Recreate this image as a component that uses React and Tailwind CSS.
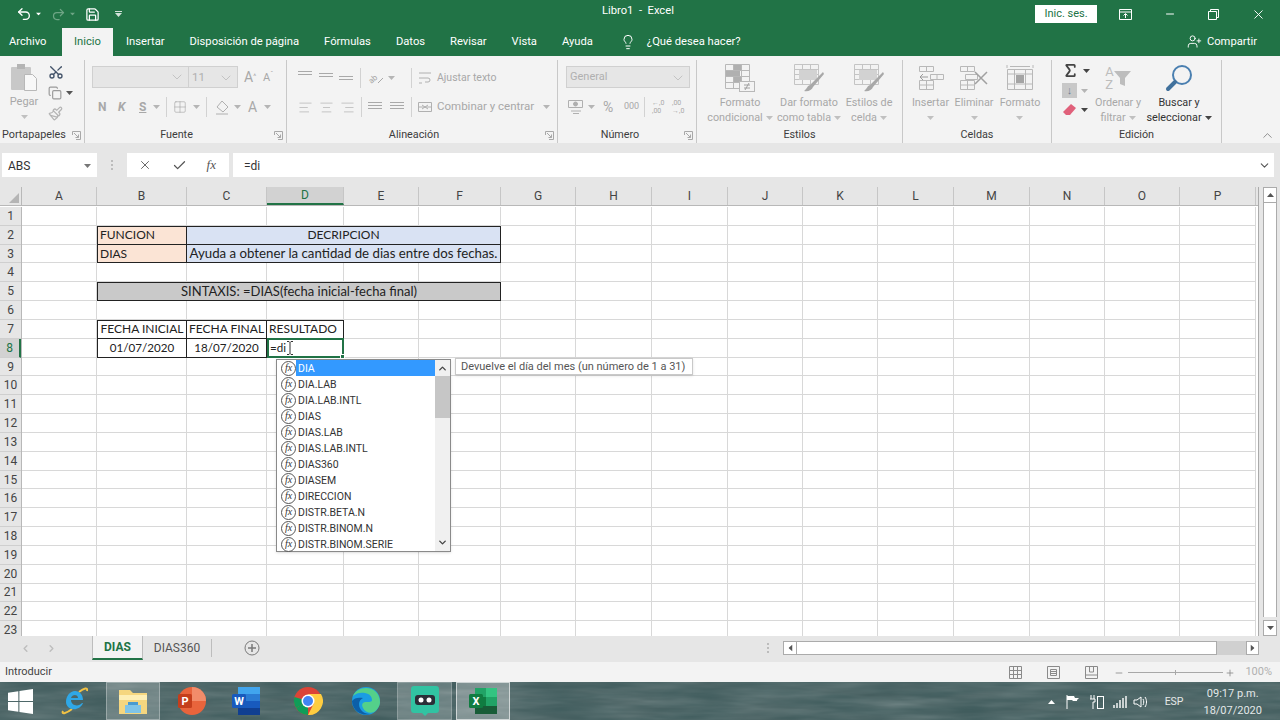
import React from 'react';
import { Undo2, Redo2, Save, ChevronDown, ChevronUp, ChevronLeft, ChevronRight, Scissors, Copy, Paintbrush, X, Check, Minus, Plus, Lightbulb, UserPlus, Sigma, AlignLeft, AlignCenter, AlignRight, Grid2x2 } from 'lucide-react';

const colWidths = [75, 90, 80, 77, 75, 82, 75, 76, 76, 75, 75, 76, 76, 75, 75, 76];
const colNames = ['A', 'B', 'C', 'D', 'E', 'F', 'G', 'H', 'I', 'J', 'K', 'L', 'M', 'N', 'O', 'P'];
const rows = Array.from({ length: 23 }, (_, i) => i + 1);

const functions = ['DIA', 'DIA.LAB', 'DIA.LAB.INTL', 'DIAS', 'DIAS.LAB', 'DIAS.LAB.INTL', 'DIAS360', 'DIASEM', 'DIRECCION', 'DISTR.BETA.N', 'DISTR.BINOM.N', 'DISTR.BINOM.SERIE'];

// cells with content, keyed by "row-col"
const cells = {
  '2-1': { text: 'FUNCION', cls: 'text-[12px] bg-[#fbe4d5] border-l border-t border-r border-b' },
  '2-2': { text: 'DECRIPCION', span: 4, cls: 'text-[12px] bg-[#d9e2f3] border-t border-r border-b justify-center' },
  '3-1': { text: 'DIAS', cls: 'text-[12px] bg-[#fbe4d5] border-l border-r border-b' },
  '3-2': { text: 'Ayuda a obtener la cantidad de dias entre dos fechas.', span: 4, cls: 'text-[13.25px] bg-[#d9e2f3] border-r border-b justify-center' },
  '5-1': { text: 'SINTAXIS: =DIAS(fecha inicial-fecha final)', span: 5, cls: 'text-[13px] bg-[#c9c9c9] border justify-center' },
  '7-1': { text: 'FECHA INICIAL', cls: 'text-[12px] border-l border-t border-r border-b justify-center' },
  '7-2': { text: 'FECHA FINAL', cls: 'text-[12px] border-t border-r border-b justify-center' },
  '7-3': { text: 'RESULTADO', cls: 'text-[12px] border-t border-r border-b' },
  '8-1': { text: '01/07/2020', cls: 'text-[11.6px] border-l border-r border-b justify-center' },
  '8-2': { text: '18/07/2020', cls: 'text-[11.6px] border-r border-b justify-center' },
};

const Caret = ({ className = '' }) => (
  <svg width="7" height="4" viewBox="0 0 7 4" className={className.includes('text-') ? className : `text-[#b5b5b5] ${className}`}><path d="M0 0h7L3.5 4z" fill="currentColor" /></svg>
);

const Launcher = () => (
  <svg width="9" height="9" viewBox="0 0 9 9" fill="none" stroke="#a8a8a8"><path d="M.5 4V.5h8v8H4M2 2l4.500 4.500M6.500 3.500v3h-3" /></svg>
);

const Sep = ({ h = 'h-[20px]' }) => <div className={`w-px ${h} bg-[#d2d2d2]`} />;

const Lines = ({ w = [14, 14, 14], align = 'start' }) => (
  <svg width="15" height="12" viewBox="0 0 15 12" stroke="#a9a9a9">
    {w.map((len, i) => {
      const x = align === 'start' ? 0 : align === 'end' ? 15 - len : (15 - len) / 2;
      return <path key={i} d={`M${x} ${1.500 + i * 3}h${len}`} />;
    })}
  </svg>
);

const LabelCol = ({ lines, width, icon, dark, caret }) => (
  <div className={`flex flex-col items-center ${width}`}>
    <div className="h-[35px] flex items-center justify-center">{icon}</div>
    <div className={`text-center text-[10.8px] leading-[15px] whitespace-nowrap ${dark ? 'text-[#333]' : 'text-[#a8a8a8]'}`}>
      {lines.map((l, i) => (
        <div key={i} className="flex items-center justify-center gap-[3px] h-[15px]">
          {l}
          {caret && i === lines.length - 1 && l && <Caret className={dark ? 'text-[#444]' : 'text-[#c0c0c0]'} />}
        </div>
      ))}
      {lines.length === 1 && <div className="flex items-center justify-center h-[15px]"><Caret className="text-[#c0c0c0]" /></div>}
    </div>
  </div>
);

const Group = ({ label, width, launcher, children, labelCls = 'justify-center' }) => (
  <div className={`flex flex-col h-[83px] mt-[4px] shrink-0 border-r border-[#c8c8c8] ${width}`}>
    <div className="h-[67px] flex">{children}</div>
    <div className={`relative h-[16px] flex items-center text-[10.8px] text-[#3c3c3c] ${labelCls}`}>
      {label}
      {launcher && <span className="absolute right-[3px] top-[4px]"><Launcher /></span>}
    </div>
  </div>
);

const CondFormatIcon = () => (
  <svg width="32" height="30" viewBox="0 0 32 30" fill="none" stroke="#b8b8b8">
    <path d="M1.500 1.500h24v24h-24zM1.500 7.500h24M1.500 13.500h24M1.500 19.500h24M9.500 1.500v24M17.500 1.500v24" />
    <path d="M10 2h7v5h-7zM2 8h14v5H2zM10 14h7v5h-7z" fill="#b0b0b0" stroke="none" />
    <rect x="15.500" y="18.500" width="15" height="10" fill="#f3f3f3" />
    <path d="M20 22h6M20 25h6M25 20l-4 7" stroke="#a0a0a0" />
  </svg>
);

const TableFormatIcon = () => (
  <svg width="32" height="30" viewBox="0 0 32 30" fill="none" stroke="#c4c4c4">
    <path d="M1.500 1.500h24v20h-24zM1.500 6.500h24M1.500 11.500h24M1.500 16.500h24M9.500 1.500v20M17.500 1.500v20" />
    <path d="M6 7h18v10H6z" fill="#d2d2d2" stroke="none" />
    <path d="M30 9L17 22c-3 1-3 4-6 6 4 1 8-1 9-4l11-13z" fill="#a8a8a8" stroke="none" />
  </svg>
);

const InsertIcon = () => (
  <svg width="26" height="26" viewBox="0 0 26 26" fill="none" stroke="#b8b8b8">
    <path d="M1.500 1.500h14v5h-14zM8.500 1.500v5M1.500 15.500h14v9h-14zM1.500 20h14M8.500 15.500v9M12.500 9.500h13v5h-13zM19 9.500v5" />
    <path d="M10 12H2M5 9l-3 3 3 3" stroke="#9a9a9a" />
  </svg>
);

const DeleteIcon = () => (
  <svg width="30" height="26" viewBox="0 0 30 26" fill="none" stroke="#b8b8b8">
    <path d="M1.500 1.500h14v5h-14zM8.500 1.500v5M1.500 15.500h14v9h-14zM1.500 20h14M8.500 15.500v9M6.500 9.500h12v5h-12z" />
    <path d="M16 7l12 12M28 7L16 19" stroke="#a0a0a0" strokeWidth="1.500" />
  </svg>
);

const CellFormatIcon = () => (
  <svg width="28" height="28" viewBox="0 0 28 28" fill="none" stroke="#b8b8b8">
    <path d="M1.500 5.500h25v20h-25zM1.500 10h25M1.500 20h25M8.500 5.500v20M19.500 5.500v20M1 1v3M27 1v3M4 2.500h20" />
    <rect x="10" y="11" width="8" height="8" fill="#a4a4a4" stroke="none" />
  </svg>
);

const FxBadge = () => (
  <span className="flex items-center justify-center w-[15px] h-[15px] rounded-full border border-[#555] bg-white text-[10px] italic leading-none text-[#333] shrink-0 font-['Liberation_Serif',serif]">
    fx
  </span>
);

const Cell = ({ row, col }) => {
  const cell = cells[`${row}-${col}`];
  if (!cell) return <div className="border-r border-b border-[#d8d8d8]" />;
  return (
    <div
      style={cell.span ? { gridColumn: `span ${cell.span}` } : undefined}
      className={`flex items-center px-[2px] text-[#222] border-[#222] whitespace-nowrap overflow-hidden ${cell.cls}`}
    >
      {cell.text}
    </div>
  );
};

// cells covered by a merged one are skipped when the grid is filled
const covered = (row, col) => {
  if ((row === 2 || row === 3) && col >= 3 && col <= 5) return true;
  if (row === 5 && col >= 2 && col <= 5) return true;
  return false;
};

export default function App() {
  return (
    <div className="relative flex flex-col w-[1280px] h-[720px] overflow-hidden bg-[#e6e6e6] font-['Roboto',sans-serif] text-[12px]">
      {/* Title bar */}
      <div className="relative flex items-center h-[28px] bg-[#217346] text-white shrink-0">
        <div className="flex items-center pl-[16px]">
          <Undo2 size={16} strokeWidth={2} />
          <Caret className="text-white ml-[3px] scale-75" />
          <Redo2 size={15} className="text-[#6ea585] ml-[9px]" />
          <Caret className="text-[#6ea585] ml-[3px] scale-75" />
          <Save size={15} strokeWidth={2} className="ml-[9px]" />
          <span className="ml-[15px] flex flex-col items-center gap-[1px]">
            <span className="w-[7px] h-px bg-white/80" />
            <Caret className="text-white/80" />
          </span>
        </div>
        <div className="absolute left-[602px] top-[3px] text-[11.2px] leading-[16px] text-white whitespace-pre">Libro1  -  Excel</div>
        <div className="ml-auto flex items-center">
          <div className="flex items-center justify-center w-[62px] h-[18px] bg-white text-[#217346] text-[11px] mr-[22px]">Inic. ses.</div>
          <svg width="13" height="11" viewBox="0 0 13 11" fill="none" stroke="white" className="mr-[32px]"><path d="M.5.5h12v10H.5zM.5 3h12M6.500 9V5M4.500 6.500l2-2 2 2" /></svg>
          <Minus size={12} className="mr-[32px]" />
          <svg width="11" height="11" viewBox="0 0 11 11" fill="none" stroke="white" className="mr-[32px]"><path d="M.5 2.500h8v8h-8zM2.500 2.500v-2h8v8h-2" /></svg>
          <X size={15} strokeWidth={1.500} className="mr-[14px]" />
        </div>
      </div>

      {/* Ribbon tabs */}
      <div className="flex items-center h-[28px] bg-[#217346] text-white text-[11.2px] shrink-0">
        <div className="w-[62px] pl-[9px]">Archivo</div>
        <div className="flex items-center justify-center h-full w-[51px] bg-[#f3f3f3] text-[#217346]">Inicio</div>
        <div className="flex items-center gap-[25px] pl-[13px] whitespace-nowrap">
          <span>Insertar</span>
          <span>Disposición de página</span>
          <span>Fórmulas</span>
          <span>Datos</span>
          <span>Revisar</span>
          <span>Vista</span>
          <span>Ayuda</span>
        </div>
        <Lightbulb size={16} strokeWidth={1.500} className="ml-[27px]" />
        <span className="ml-[11px]">¿Qué desea hacer?</span>
        <div className="ml-auto flex items-center gap-[5px] pr-[23px]">
          <UserPlus size={15} strokeWidth={1.500} />
          <span>Compartir</span>
        </div>
      </div>

      {/* Ribbon */}
      <div className="relative flex h-[87px] bg-[#f3f3f3] shrink-0">
        <Group label="Portapapeles" width="w-[85px]" launcher labelCls="justify-start pl-[2px]">
          <div className="flex flex-col items-center w-[48px] pt-[3px]">
            <svg width="28" height="29" viewBox="0 0 28 29">
              <rect x="1" y="4" width="20" height="23" rx="1" fill="#c8c8c8" />
              <rect x="7" y="1" width="8" height="5" fill="#b4b4b4" />
              <path d="M14.500 11.500h8l4 4v12h-12z" fill="#f8f8f8" stroke="#b8b8b8" />
            </svg>
            <span className="mt-[2px] text-[11px] leading-[15px] text-[#a8a8a8]">Pegar</span>
            <Caret className="mt-[6px] text-[#c0c0c0]" />
          </div>
          <div className="flex flex-col gap-[6px] pt-[4px]">
            <Scissors size={16} className="text-[#44546a] -rotate-90" />
            <div className="flex items-center gap-[4px]"><Copy size={14} className="text-[#9a9a9a]" /><Caret className="text-[#555]" /></div>
            <Paintbrush size={15} className="text-[#b4b4b4]" />
          </div>
        </Group>

        <Group label="Fuente" width="w-[202px]" launcher labelCls="justify-center pr-[18px]">
          <div className="flex flex-col pl-[7px] w-full">
            <div className="flex items-center h-[22px] mt-[6px]">
              <div className="flex items-center justify-end w-[97px] h-[22px] bg-[#e6e6e6] border border-[#d0d0d0] pr-[3px]"><ChevronDown size={16} strokeWidth={1} className="text-[#b0b0b0]" /></div>
              <div className="flex items-center justify-between w-[49px] h-[22px] bg-[#e6e6e6] border border-l-0 border-[#d0d0d0] px-[3px] pt-px text-[#b0b0b0] text-[11.5px]">11<ChevronDown size={16} strokeWidth={1} /></div>
              <span className="ml-[6px] text-[14px] text-[#a8a8a8] leading-none">A<sup className="text-[7px]">^</sup></span>
              <span className="ml-[7px] text-[11px] text-[#a8a8a8] leading-none">A<sup className="text-[7px]">ˇ</sup></span>
            </div>
            <div className="flex items-center h-[20px] mt-[9px] pl-[6px] text-[#a8a8a8] font-bold text-[12px]">
              <span className="w-[20px]">N</span>
              <span className="w-[21px] italic">K</span>
              <span className="w-[12px] underline">S</span>
              <Caret className="ml-[2px] mr-[6px]" />
              <Sep />
              <Grid2x2 size={14} strokeWidth={1} className="ml-[6px] text-[#a0a0a0]" />
              <Caret className="ml-[6px] mr-[6px]" />
              <Sep />
              <svg width="15" height="15" viewBox="0 0 15 15" className="ml-[8px]" fill="none" stroke="#b0b0b0"><path d="M7 1l6 6-5 5-6-5zM1 14h12" /></svg>
              <Caret className="ml-[4px] mr-[7px]" />
              <span className="text-[14px] font-normal leading-none">A</span>
              <Caret className="ml-[7px]" />
            </div>
          </div>
        </Group>

        <Group label="Alineación" width="w-[271px]" launcher labelCls="justify-center pr-[16px]">
          <div className="flex flex-col pl-[11px] w-full">
            <div className="flex items-center h-[20px] mt-[8px]">
              <span className="w-[21px] -mt-[4px]"><Lines w={[14, 14]} /></span>
              <span className="w-[20px]"><Lines w={[14, 14]} /></span>
              <span className="w-[21px] pt-[5px]"><Lines w={[14, 14]} /></span>
              <Sep />
              <svg width="17" height="15" viewBox="0 0 17 15" fill="#a8a8a8" className="ml-[7px]">
                <text x="1" y="11" fontSize="8" transform="rotate(-40 5 9)">ab</text>
                <path d="M10 12l5-5" stroke="#a8a8a8" fill="none" />
              </svg>
              <Caret className="ml-[3px] mr-[16px]" />
              <Sep />
              <svg width="14" height="14" viewBox="0 0 14 14" fill="none" stroke="#b0b0b0" className="ml-[6px]"><path d="M1 2h12M1 7h9a2 2 0 010 4H7M1 12h3" /></svg>
              <span className="ml-[5px] text-[#a8a8a8] text-[10.5px] whitespace-nowrap">Ajustar texto</span>
            </div>
            <div className="flex items-center h-[20px] mt-[9px]">
              <AlignLeft size={15} strokeWidth={1} className="text-[#a9a9a9] mr-[6px]" />
              <AlignCenter size={15} strokeWidth={1} className="text-[#a9a9a9] mr-[6px]" />
              <AlignRight size={15} strokeWidth={1} className="text-[#a9a9a9] mr-[6px]" />
              <Sep />
              <span className="ml-[6px] w-[22px]"><Lines /></span>
              <Lines />
              <span className="w-[6px]" />
              <Sep />
              <svg width="14" height="14" viewBox="0 0 14 14" fill="none" stroke="#b0b0b0" className="ml-[6px]"><path d="M.5 2.500h13v9H.5zM.5 7h13M4 5l3 2-3 2M10 5L7 7l3 2" /></svg>
              <span className="ml-[5px] text-[#a8a8a8] text-[11.5px] whitespace-nowrap">Combinar y centrar</span>
              <Caret className="ml-[9px]" />
            </div>
          </div>
        </Group>

        <Group label="Número" width="w-[139px]" launcher labelCls="justify-center pr-[14px]">
          <div className="flex flex-col pl-[8px] w-full">
            <div className="flex items-center justify-between w-[124px] h-[22px] mt-[6px] bg-[#e6e6e6] border border-[#d0d0d0] px-[3px] pt-px text-[#b0b0b0] text-[11px]">General<ChevronDown size={16} strokeWidth={1} /></div>
            <div className="flex items-center h-[20px] mt-[9px] text-[#a8a8a8]">
              <svg width="16" height="15" viewBox="0 0 16 15" fill="none" stroke="#b0b0b0" className="ml-[2px]"><path d="M.5.500h14v7H.5zM3 11h10M5 13.500h6" /><circle cx="7.500" cy="4" r="2" fill="#b0b0b0" /></svg>
              <Caret className="ml-[4px] mr-[8px]" />
              <span className="text-[14px] w-[21px]">%</span>
              <span className="text-[9px] w-[20px]">000</span>
              <Sep />
              <span className="ml-[7px] text-[7px] leading-[8px] w-[20px]">←,0<br />,00</span>
              <span className="text-[7px] leading-[8px]">,00<br />→,0</span>
            </div>
          </div>
        </Group>

        <Group label="Estilos" width="w-[206px]">
          <LabelCol width="w-[84px] ml-[1px]" icon={<CondFormatIcon />} lines={['Formato', 'condicional']} caret />
          <LabelCol width="w-[54px]" icon={<TableFormatIcon />} lines={['Dar formato', 'como tabla']} caret />
          <LabelCol width="w-[66px]" icon={<TableFormatIcon />} lines={['Estilos de', 'celda']} caret />
        </Group>

        <Group label="Celdas" width="w-[149px]">
          <LabelCol width="w-[49px] ml-[3px]" icon={<InsertIcon />} lines={['Insertar']} />
          <LabelCol width="w-[38px]" icon={<DeleteIcon />} lines={['Eliminar']} />
          <LabelCol width="w-[54px]" icon={<CellFormatIcon />} lines={['Formato']} />
        </Group>

        <Group label="Edición" width="w-[170px]">
          <div className="flex flex-col gap-[4px] pl-[10px] pt-[2px] w-[44px]">
            <div className="flex items-center gap-[4px]"><Sigma size={17} strokeWidth={2.500} className="text-[#444]" /><Caret className="text-[#444]" /></div>
            <div className="flex items-center gap-[4px]">
              <span className="flex items-center justify-center w-[15px] h-[15px] bg-[#c8c8c8] text-[#6e7f92] text-[11px] leading-none">↓</span>
              <Caret />
            </div>
            <div className="flex items-center gap-[4px]">
              <svg width="15" height="15" viewBox="0 0 15 15" className="text-[#e0607a]"><path d="M9 2l5 4-6 7H4L1 10z" fill="currentColor" /></svg>
              <Caret className="text-[#444]" />
            </div>
          </div>
          <LabelCol width="w-[44px]" icon={
            <div className="flex items-center">
              <div className="flex flex-col text-[13px] leading-[13px] text-[#bdbdbd]"><span>A</span><span>Z</span></div>
              <svg width="17" height="18" viewBox="0 0 17 18"><path d="M0 2h17l-6 7v8l-5-2V9z" fill="#bdbdbd" /></svg>
            </div>
          } lines={['Ordenar y', 'filtrar']} caret />
          <LabelCol dark width="w-[78px]" icon={
            <svg width="28" height="28" viewBox="0 0 28 28" fill="none">
              <circle cx="17" cy="11" r="9" stroke="#4a7fb0" strokeWidth="2" />
              <path d="M10 18l-7 7" stroke="#41719c" strokeWidth="4" strokeLinecap="round" />
            </svg>
          } lines={['Buscar y', 'seleccionar']} caret />
        </Group>

        <ChevronUp size={15} strokeWidth={1} className="absolute right-[5px] bottom-[0px] text-[#555]" />
      </div>

      {/* Formula bar */}
      <div className="flex items-center h-[44px] pt-[10px] pb-[10px] shrink-0">
        <div className="flex items-center justify-between w-[95px] h-[24px] ml-[2px] bg-white px-[6px] pt-[1px] text-[12px] text-[#333]">ABS<Caret className="text-[#777]" /></div>
        <div className="flex flex-col gap-[2px] ml-[14px]">
          <span className="w-[2px] h-[2px] bg-[#bcbcbc]" /><span className="w-[2px] h-[2px] bg-[#bcbcbc]" /><span className="w-[2px] h-[2px] bg-[#bcbcbc]" />
        </div>
        <div className="flex items-center justify-between w-[102px] h-[24px] ml-[14px] bg-white px-[11px] text-[#555]">
          <X size={14} strokeWidth={1.500} />
          <Check size={15} strokeWidth={2} />
          <span className="italic text-[13px] font-['Liberation_Serif',serif] pr-[2px]">fx</span>
        </div>
        <div className="flex items-center justify-between w-[1041px] h-[24px] ml-[4px] bg-white pl-[11px] pr-[3px] pt-[1px] text-[#333]">
          =di
          <ChevronDown size={13} strokeWidth={2} className="text-[#555]" />
        </div>
      </div>

      {/* Sheet area */}
      <div className="relative flex h-[449px] shrink-0 bg-white overflow-hidden">
        <div className="w-[1259px] shrink-0 font-['Lato',sans-serif] border-r border-[#ababab]">
          <div className="flex h-[19px] bg-[#e6e6e6] text-[12px] text-[#444] font-['Roboto',sans-serif] border-b border-[#b8b8b8]">
            <div className="relative w-[22px] shrink-0 border-r border-[#b8b8b8]">
              <svg width="10" height="10" viewBox="0 0 10 10" className="absolute right-[2px] bottom-[2px]"><path d="M10 0v10H0z" fill="#b5b5b5" /></svg>
            </div>
            {colNames.map((c, i) => (
              <div key={c} style={{ width: colWidths[i] }} className={`flex items-center justify-center shrink-0 border-r border-[#c6c6c6] ${c === 'D' ? 'bg-[#d2d2d2] border-b-2 border-b-[#217346] text-[#217346]' : ''}`}>{c}</div>
            ))}
          </div>
          <div className="flex pt-px">
            <div className="w-[22px] shrink-0 bg-[#e6e6e6] border-r border-[#b8b8b8]">
              {rows.map((r) => (
                <div key={r} className={`flex items-center justify-center h-[18.83px] text-[12px] text-[#444] font-['Roboto',sans-serif] border-b border-[#cfcfcf] ${r === 8 ? 'bg-[#d2d2d2] text-[#217346] border-r-2 border-r-[#217346]' : ''}`}>{r}</div>
              ))}
            </div>
            <div className="relative grid auto-rows-[18.83px] grid-cols-[75px_90px_80px_77px_75px_82px_75px_76px_76px_75px_75px_76px_76px_75px_75px_76px]">
              {rows.map((r) => colNames.map((c, col) => (
                covered(r, col) ? null : r === 8 && col === 3 ? (
                  <div key={`${r}-${c}`} className="relative flex items-center pl-px text-[11.6px] text-[#222] border-2 border-[#217346] -mt-px">
                    =di
                    <svg width="6" height="14" viewBox="0 0 6 14" fill="none" stroke="#333" className="ml-[1px]"><path d="M0 .5h2l1 1 1-1h2M3 1.500v11M0 13.500h2l1-1 1 1h2" /></svg>
                    <span className="absolute -right-[3px] -bottom-[3px] w-[5px] h-[5px] bg-[#217346] border border-white" />
                  </div>
                ) : (
                  <Cell key={`${r}-${c}`} row={r} col={col} />
                )
              )))}
            </div>
          </div>
        </div>

        {/* Vertical scrollbar */}
        <div className="flex flex-col w-[21px] bg-[#e6e6e6] pl-[4px] pr-[3px]">
          <div className="flex items-center justify-center h-[16px] bg-white border border-[#ababab]"><Caret className="text-[#555] rotate-180" /></div>
          <div className="flex-1 flex flex-col">
            <div className="h-[414px] bg-white border-x border-[#ababab]" />
          </div>
          <div className="flex items-center justify-center h-[16px] bg-white border border-[#ababab]"><Caret className="text-[#555]" /></div>
        </div>

        {/* Autocomplete list */}
        <div className="absolute left-[276px] top-[172px] flex w-[175px] h-[193px] bg-white border border-[#8a8a8a] shadow-sm font-['Roboto',sans-serif]">
          <div className="w-[159px] pl-[4px]">
            {functions.map((f, i) => (
              <div key={f} className="flex items-center h-[16px] text-[10.5px] text-[#333]">
                <FxBadge />
                <span className={`flex items-center flex-1 h-full pl-[2px] pt-px ${i === 0 ? 'bg-[#3399ff] text-white' : ''}`}>{f}</span>
              </div>
            ))}
          </div>
          <div className="flex flex-col items-center w-[15px] bg-[#f0f0f0]">
            <ChevronUp size={11} strokeWidth={3} className="mt-[3px] text-[#444]" />
            <div className="w-full h-[42px] mt-[2px] bg-[#c6c6c6]" />
            <ChevronDown size={11} strokeWidth={3} className="mt-auto mb-[3px] text-[#444]" />
          </div>
        </div>

        {/* Tooltip */}
        <div className="absolute left-[455px] top-[171px] flex items-center w-[238px] h-[17px] bg-white border border-[#c9c9c9] shadow-sm pl-[5px] pt-px text-[11px] text-[#555] whitespace-nowrap">
          Devuelve el día del mes (un número de 1 a 31)
        </div>
      </div>

      {/* Sheet tabs */}
      <div className="flex items-center h-[26px] bg-[#e6e6e6] shrink-0 pb-[2px]">
        <div className="flex items-center gap-[15px] pl-[20px] w-[92px] text-[#bdbdbd]">
          <ChevronLeft size={11} strokeWidth={3} />
          <ChevronRight size={11} strokeWidth={3} />
        </div>
        <div className="flex items-center justify-center w-[51px] h-[24px] bg-[#f3f3f3] border-x border-[#bdbdbd] border-b-2 border-b-[#217346] text-[#217346] font-bold text-[12px]">DIAS</div>
        <div className="flex items-center justify-center w-[69px] h-[18px] text-[#555] border-r border-[#bdbdbd]">DIAS360</div>
        <svg width="16" height="16" viewBox="0 0 16 16" fill="none" stroke="#7a7a7a" className="ml-[32px]"><circle cx="8" cy="8" r="7" /><path d="M8 4v8M4 8h8" strokeWidth="1.500" /></svg>
        <div className="flex flex-col gap-[2px] ml-[507px]">
          <span className="w-[2px] h-[2px] bg-[#bcbcbc]" /><span className="w-[2px] h-[2px] bg-[#bcbcbc]" /><span className="w-[2px] h-[2px] bg-[#bcbcbc]" />
        </div>
        <div className="flex h-[14px] ml-[14px] w-[476px] bg-[#d0d0d0]">
          <div className="flex items-center justify-center w-[14px] bg-white border border-[#ababab]"><Caret className="text-[#555] rotate-90" /></div>
          <div className="w-[420px] bg-white border-y border-r border-[#ababab]" />
          <div className="flex-1" />
          <div className="flex items-center justify-center w-[13px] bg-white border border-[#ababab]"><Caret className="text-[#555] -rotate-90" /></div>
        </div>
      </div>

      {/* Status bar */}
      <div className="flex items-center h-[20px] bg-[#f3f3f3] shrink-0 text-[11px] text-[#444] pl-[5px] pt-px">
        <span>Introducir</span>
        <div className="ml-auto flex items-center text-[#8a8a8a]">
          <svg width="13" height="13" viewBox="0 0 13 13" fill="none" stroke="currentColor"><path d="M.5.500h12v12H.5zM.5 4.500h12M.5 8.500h12M4.500.500v12M8.500.500v12" /></svg>
          <svg width="13" height="13" viewBox="0 0 13 13" fill="none" stroke="currentColor" className="ml-[25px]"><path d="M.5.500h12v12H.5zM3.500 3.500h6v6h-6zM3.500 5.500h6M3.500 7.500h6" /></svg>
          <svg width="13" height="13" viewBox="0 0 13 13" fill="none" stroke="currentColor" className="ml-[25px]"><path d="M.5.500h12v12H.5zM.5 9h12M4.500.500V6h4V.500" /></svg>
          <Minus size={10} className="ml-[16px]" />
          <div className="relative w-[95px] h-px ml-[4px] bg-[#a8a8a8]"><span className="absolute left-[47px] -top-[2px] w-px h-[5px] bg-[#a8a8a8]" /></div>
          <Plus size={10} className="ml-[2px]" />
          <span className="ml-[10px] mr-[8px] text-[#b0b0b0]">100%</span>
        </div>
      </div>

      {/* Taskbar */}
      <div className="relative flex items-center flex-1 bg-[#3d5a5b] text-white overflow-hidden">
        <svg className="absolute inset-0 w-full h-full opacity-30" aria-hidden="true">
          <filter id="water"><feTurbulence type="fractalNoise" baseFrequency="0.015 0.12" numOctaves="3" seed="4" /><feColorMatrix type="saturate" values="0" /></filter>
          <rect width="100%" height="100%" filter="url(#water)" />
        </svg>
        <div className="relative flex items-center w-full">
          <svg width="25" height="25" viewBox="0 0 23 23" fill="white" className="ml-[8px]"><path d="M0 3.500l9.500-1.500v9H0zM10.500 1.800L23 0v11H10.500zM0 12h9.500v9L0 19.500zM10.500 12H23v11l-12.500-1.800z" /></svg>

          <svg width="28" height="30" viewBox="0 0 28 30" className="ml-[27px]" fill="none">
            <path d="M3 25C1 29 7 27 12 23M19 6c5-4 9-5 8-1" stroke="#f3c344" strokeWidth="2" />
            <path d="M6 16c0-6 4-11 9-11s8 4 8 9H11c0 6 8 7 11 3h-1 2c-2 5-7 7-11 6-4-1-6-4-6-7zm5-4h7c0-4-6-4-7 0z" fill="#2fa7e6" />
          </svg>

          <div className="flex items-center justify-center w-[54px] h-[38px] ml-[18px] bg-white/20 border border-white/30">
            <svg width="30" height="28" viewBox="0 0 30 28">
              <path d="M1 3h11l3 3h14v21H1z" fill="#f5d67f" />
              <path d="M1 8h28v5H1z" fill="#fdeeb5" />
              <path d="M7 18h16v8H7z" fill="#7fc4e8" />
              <path d="M10 15h10v3H10z" fill="#4a9bd0" />
            </svg>
          </div>

          <svg width="32" height="32" viewBox="0 0 32 32" className="ml-[15px]">
            <circle cx="17" cy="16" r="14" fill="#e8643c" />
            <path d="M17 2a14 14 0 0114 14H17z" fill="#f28c6a" />
            <rect x="3" y="9" width="14" height="14" rx="1.500" fill="#c43e1c" />
            <text x="10" y="20" fill="white" fontSize="11" fontWeight="700" textAnchor="middle">P</text>
          </svg>

          <svg width="32" height="32" viewBox="0 0 32 32" className="ml-[23px]">
            <rect x="8" y="2" width="22" height="7" fill="#41a5ee" />
            <rect x="8" y="9" width="22" height="7" fill="#2b7cd3" />
            <rect x="8" y="16" width="22" height="7" fill="#185abd" />
            <rect x="8" y="23" width="22" height="7" fill="#103f91" />
            <rect x="2" y="9" width="14" height="14" rx="1.500" fill="#185abd" />
            <text x="9" y="20" fill="white" fontSize="11" fontWeight="700" textAnchor="middle">W</text>
          </svg>

          <svg width="30" height="30" viewBox="0 0 30 30" className="ml-[31px]">
            <circle cx="15" cy="15" r="14" fill="#db4437" />
            <path d="M15 15L3 22a14 14 0 0012 7z" fill="#0f9d58" />
            <path d="M15 15l-12 7A14 14 0 011.500 11z" fill="#0f9d58" />
            <path d="M15 8h13a14 14 0 01-13 21l6-12z" fill="#ffcd40" />
            <circle cx="15" cy="15" r="6.500" fill="white" />
            <circle cx="15" cy="15" r="5" fill="#4285f4" />
          </svg>

          <svg width="30" height="30" viewBox="0 0 30 30" className="ml-[28px]">
            <circle cx="15" cy="15" r="14" fill="#1b9de2" />
            <path d="M29 16c0-8-6-14-14-14C9 2 4 5 2 10c3-3 8-4 12-3 5 1 7 4 7 7 0 2-3 2-6 2-3 0-5 2-3 6 2 4 7 6 11 4 3-2 6-6 6-10z" fill="#54d08a" />
            <path d="M1 15a14 14 0 0018 13c-6 0-11-4-11-10 0-3 2-5 4-6-5-1-9 0-11 3z" fill="#0d5fa8" />
          </svg>

          <div className="flex items-center justify-center w-[55px] h-[38px] ml-[16px] bg-white/20 border border-white/20">
            <svg width="30" height="32" viewBox="0 0 30 32">
              <path d="M4 1h22a3 3 0 013 3v21a3 3 0 01-3 3H18l-3 3-3-3H4a3 3 0 01-3-3V4a3 3 0 013-3z" fill="#31c3a2" />
              <rect x="5" y="10" width="20" height="10" rx="3" fill="#2b2e38" />
              <circle cx="11" cy="15" r="2.500" fill="white" />
              <circle cx="19" cy="15" r="2.500" fill="white" />
            </svg>
          </div>

          <div className="flex items-center justify-center w-[54px] h-[38px] ml-[4px] bg-white/30 border border-white/60">
            <svg width="30" height="30" viewBox="0 0 30 30">
              <rect x="7" y="2" width="11" height="9" fill="#21a366" />
              <rect x="18" y="2" width="11" height="9" fill="#33c481" />
              <rect x="7" y="11" width="11" height="9" fill="#107c41" />
              <rect x="18" y="11" width="11" height="9" fill="#21a366" />
              <rect x="7" y="20" width="22" height="8" fill="#185c37" />
              <rect x="1" y="8" width="14" height="14" rx="1.500" fill="#107c41" />
              <text x="8" y="19" fill="white" fontSize="11" fontWeight="700" textAnchor="middle">X</text>
            </svg>
          </div>

          <div className="ml-auto flex items-center text-[#e4e8e8] pr-[18px] pt-px">
            <Caret className="text-white rotate-180" />
            <svg width="14" height="14" viewBox="0 0 14 14" fill="none" stroke="white" className="ml-[11px]"><path d="M1 0v14" /><path d="M1 1h7l1 2h4l-2 2 0 1H7L6 5H1z" fill="white" stroke="none" /></svg>
            <svg width="14" height="16" viewBox="0 0 14 16" fill="none" stroke="white" className="ml-[10px]"><path d="M1 1v4M4 1v4M0 5h5v3H3v7" /><rect x="7.500" y="2.500" width="6" height="12" /></svg>
            <svg width="14" height="14" viewBox="0 0 14 14" fill="none" stroke="white" className="ml-[9px] opacity-70"><path d="M1 13v-3M4 13V8M7 13V5M10 13V3M13 13V1" strokeWidth="2" /></svg>
            <svg width="16" height="14" viewBox="0 0 16 14" fill="none" stroke="white" className="ml-[6px]"><path d="M1 5h3l4-3v10L4 9H1zM10 4c1 2 1 4 0 6M12 2c2 3 2 7 0 10" /></svg>
            <span className="ml-[16px] text-[10.5px]">ESP</span>
            <div className="ml-[20px] flex flex-col items-center text-[11px] leading-[17px]">
              <span>09:17 p.m.</span>
              <span>18/07/2020</span>
            </div>
          </div>
        </div>
      </div>
    </div>
  );
}
